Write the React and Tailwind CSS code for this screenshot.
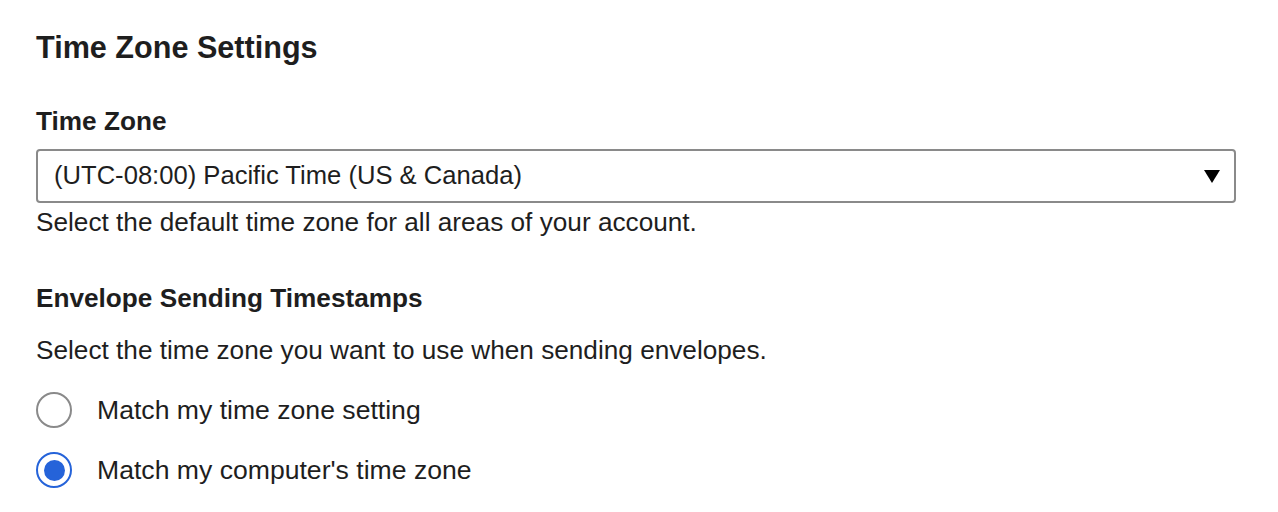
import React, { useState } from "react";

const zones = ["(UTC-08:00) Pacific Time (US & Canada)"];

const Radio = ({ checked, label, onClick }) => (
  <label className="flex items-center h-[36px] cursor-pointer" onClick={onClick}>
    <span
      className={
        checked
          ? "w-[36px] h-[36px] rounded-full border-2 border-[#2563d9] flex items-center justify-center bg-white"
          : "w-[36px] h-[36px] rounded-full border-2 border-[#8a8a8a] bg-white"
      }
    >
      {checked && <span className="w-[21px] h-[21px] rounded-full bg-[#2563d9]" />}
    </span>
    <span className="ml-[25px] leading-[32px] text-[26.6px]">{label}</span>
  </label>
);

const App = () => {
  const [mode, setMode] = useState("computer");

  return (
    <div
      className="min-h-[512px] bg-white pl-[36px] pr-[42px] pt-[29px] text-[26.2px] text-[#1e1e1e]"
      style={{ fontFamily: '"Liberation Sans", Arial, sans-serif' }}
    >
      <h1 className="text-[30.6px] leading-[36px] font-bold">Time Zone Settings</h1>

      {/* Time zone select */}
      <h2 className="mt-[40px] font-bold leading-[32px]">Time Zone</h2>
      <div className="mt-[12px] h-[54px] border-2 border-[#8a8a8a] rounded-[4px] flex items-center justify-between pl-[16px] pr-[14px]">
        <span className="leading-[32px] pb-[3px] text-[25.6px]">{zones[0]}</span>
        <svg width="16" height="13" viewBox="0 0 16 13">
          <polygon points="0,0 16,0 8,13" fill="#000" />
        </svg>
      </div>
      <p className="mt-[3px] leading-[32px]">Select the default time zone for all areas of your account.</p>

      {/* Envelope timestamps */}
      <h2 className="mt-[44px] font-bold leading-[32px]">Envelope Sending Timestamps</h2>
      <p className="mt-[20px] leading-[32px]">Select the time zone you want to use when sending envelopes.</p>
      <div className="mt-[26px] flex flex-col gap-[24px]">
        <Radio
          label="Match my time zone setting"
          checked={mode === "setting"}
          onClick={() => setMode("setting")}
        />
        <Radio
          label="Match my computer's time zone"
          checked={mode === "computer"}
          onClick={() => setMode("computer")}
        />
      </div>
    </div>
  );
};

export default App;
